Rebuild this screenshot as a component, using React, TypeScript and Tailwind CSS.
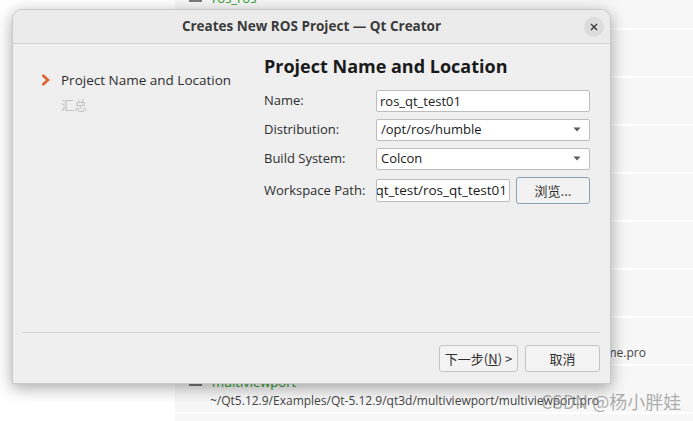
import React from 'react';

const FONT = "font-['Open_Sans','Noto_Sans_CJK_SC',sans-serif]";

const bgRows = [
  { title: 'ros_ros', path: '' },
  { title: '', path: '' },
  { title: '', path: '' },
  { title: '', path: '' },
  { title: '', path: '' },
  { title: '', path: '' },
  { title: '', path: '' },
  { title: '', path: '~/Qt5.12.9/Examples/Qt-5.12.9/qt3d/wireframe/wireframe-qml/wireframe.pro' },
  { title: 'multiviewport', path: '~/Qt5.12.9/Examples/Qt-5.12.9/qt3d/multiviewport/multiviewport.pro' },
  { title: '', path: '' },
];

const Caret = () => (
  <svg width="8" height="5" viewBox="0 0 8 5" className="shrink-0">
    <path d="M0.5 0.5 L7.5 0.5 L4 4.5 Z" fill="#5a5a5a" />
  </svg>
);

const Field: React.FC<{ label: string; children: React.ReactNode }> = ({ label, children }) => (
  <div className="flex items-center h-[29px]">
    <span className="w-[112px] shrink-0 text-[13px] text-[#2e2e2e]">{label}</span>
    {children}
  </div>
);

export default function App() {
  return (
    <div className={`relative w-[693px] h-[421px] overflow-hidden bg-white ${FONT}`}>
      {/* project list behind the dialog */}
      <div className="ml-[175px] mt-[-18px] bg-[#f7f7f7]">
        {bgRows.map((r, i) => (
          <div key={i} className="h-[48px] border-b-[2px] border-white flex flex-col pt-[7px] pl-[14px]">
            <div className="flex items-center gap-[10px] h-[18px]">
              <span className="w-[13px] h-[8px] bg-[#7a7a7a]" />
              <span className="text-[13px] text-[#2a9a2a] leading-none">{r.title}</span>
            </div>
            <div className="pl-[21px] text-[12px] text-[#444] leading-[20px] whitespace-nowrap">{r.path}</div>
          </div>
        ))}
      </div>

      {/* watermark */}
      <div className="absolute left-[541px] top-[392px] text-[18px] text-[#8c8c8c]/70 font-['Noto_Sans_CJK_SC',sans-serif] leading-none">
        CSDN @杨小胖娃
      </div>

      {/* dialog window */}
      <div className="absolute left-[12px] top-[9px] w-[599px] h-[375px] flex flex-col bg-[#efefef] rounded-t-[10px] border border-[#c9c9c9] shadow-[0_4px_16px_rgba(0,0,0,0.35)]">
        <div className="relative h-[34px] shrink-0 flex items-center justify-center bg-[#ebebeb] border-b border-[#d4d4d4] rounded-t-[10px]">
          <span className="text-[13.5px] font-bold text-[#3a3a3a]">Creates New ROS Project — Qt Creator</span>
          <button className="absolute right-[6px] top-[7px] w-[20px] h-[20px] rounded-full bg-[#dcdcdc] flex items-center justify-center">
            <svg width="8" height="8" viewBox="0 0 8 8">
              <path d="M1 1 L7 7 M7 1 L1 7" stroke="#333" strokeWidth="1.3" />
            </svg>
          </button>
        </div>

        <div className="flex flex-1">
          <div className="w-[251px] shrink-0 pt-[27px] pl-[28px]">
            <div className="flex items-center h-[18px]">
              <svg width="9" height="12" viewBox="0 0 9 12" className="mr-[11px]">
                <path d="M1.5 1 L7 6 L1.5 11" fill="none" stroke="#e0602a" strokeWidth="2.6" />
              </svg>
              <span className="text-[13.5px] text-[#2e2e2e]">Project Name and Location</span>
            </div>
            <div className="pl-[20px] mt-[6px] text-[13px] text-[#c2c2c2] font-['Noto_Sans_CJK_SC',sans-serif]">汇总</div>
          </div>

          <div className="flex-1 pt-[8px] pr-[8px]">
            <div className="text-[18px] font-bold text-[#1a1a1a] h-[28px] leading-[28px]">Project Name and Location</div>
            <div className="mt-[6px] flex flex-col">
              <Field label="Name:">
                <div className="w-[214px] h-[22px] bg-white border border-[#bdbdbd] rounded-[2px] px-[3px] text-[13px] leading-[20px] text-[#1a1a1a]">
                  ros_qt_test01
                </div>
              </Field>
              <Field label="Distribution:">
                <div className="w-[214px] h-[22px] bg-white border border-[#bdbdbd] rounded-[2px] pl-[4px] pr-[8px] flex items-center justify-between text-[13px] text-[#1a1a1a]">
                  /opt/ros/humble
                  <Caret />
                </div>
              </Field>
              <Field label="Build System:">
                <div className="w-[214px] h-[22px] bg-white border border-[#bdbdbd] rounded-[2px] pl-[4px] pr-[8px] flex items-center justify-between text-[13px] text-[#1a1a1a]">
                  Colcon
                  <Caret />
                </div>
              </Field>
              <div className="flex items-center h-[31px] mt-[2px]">
                <span className="w-[112px] shrink-0 text-[13px] text-[#2e2e2e]">Workspace Path:</span>
                <div className="w-[134px] h-[23px] bg-white border border-[#bdbdbd] rounded-[2px] overflow-hidden flex justify-end pr-[2px] text-[13.5px] leading-[21px] text-[#1a1a1a] whitespace-nowrap">
                  <span className="shrink-0">/home/user/ros_qt_test/ros_qt_test01</span>
                </div>
                <button className="ml-[6px] w-[74px] h-[27px] bg-[#f2f2f2] border border-[#8aa0b8] rounded-[3px] text-[13px] text-[#2e2e2e] font-['Noto_Sans_CJK_SC',sans-serif]">
                  浏览...
                </button>
              </div>
            </div>
          </div>
        </div>

        <div className="mx-[10px] border-t border-[#cfcfcf]" />
        <div className="h-[50px] flex items-start justify-end gap-[7px] pt-[12px] pr-[10px]">
          <button className="w-[79px] h-[27px] bg-[#f3f3f3] border border-[#c4c4c4] rounded-[3px] text-[13px] text-[#2e2e2e] font-['Noto_Sans_CJK_SC',sans-serif]">
            下一步(<span className="underline">N</span>) &gt;
          </button>
          <button className="w-[75px] h-[27px] bg-[#f3f3f3] border border-[#c4c4c4] rounded-[3px] text-[13px] text-[#2e2e2e] font-['Noto_Sans_CJK_SC',sans-serif]">
            取消
          </button>
        </div>
      </div>
    </div>
  );
}
